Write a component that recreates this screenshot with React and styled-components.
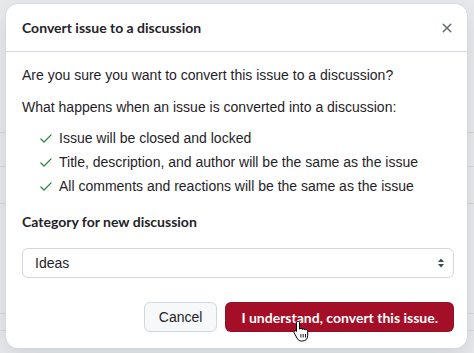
import React from 'react'
import styled, { createGlobalStyle } from 'styled-components'

const colors = {
    text: '#1f2328',
    muted: '#656d76',
    border: '#d0d7de',
    green: '#1a7f37',
    danger: '#a40e26',
    backdrop: '#e9eaec'
}

const GlobalStyle = createGlobalStyle`
    body {
        margin: 0;
        background: ${colors.backdrop};
        font-family: 'Liberation Sans', Arial, sans-serif;
        color: ${colors.text};
    }
`

const Page = styled.div`
    height: 353px;
    overflow: hidden;
    position: relative;
    width: 474px;
`

const Underlay = styled.div`
    display: flex;
    flex-direction: column;
    padding-top: 96px;
`

const UnderRow = styled.div`
    border-bottom: 1px solid #d4d7db;
    height: ${props => props.h}px;
`

const Dialog = styled.div`
    background: #ffffff;
    border-radius: 12px;
    box-shadow: 0 0 0 1px rgba(208, 215, 222, 0.6), 0 8px 24px rgba(140, 149, 159, 0.3);
    display: flex;
    flex-direction: column;
    height: 344px;
    left: 6px;
    position: absolute;
    top: 4px;
    width: 461px;
`

const Header = styled.div`
    align-items: center;
    border-bottom: 1px solid ${colors.border};
    display: flex;
    height: 47px;
    justify-content: space-between;
    padding: 0 8px 0 16px;
`

const Title = styled.h1`
    font-family: Lato, 'Liberation Sans', sans-serif;
    font-size: 14px;
    font-weight: 700;
    margin: 0;
`

const CloseButton = styled.button`
    align-items: center;
    background: transparent;
    border: none;
    color: ${colors.muted};
    display: flex;
    height: 24px;
    justify-content: center;
    padding: 0;
    width: 24px;
`

const Body = styled.div`
    display: flex;
    flex-direction: column;
    font-size: 14px;
    line-height: 20px;
    padding: 13px 13px 16px 16px;
`

const Paragraph = styled.p`
    margin: 0 0 ${props => props.gap}px;
`

const CheckList = styled.ul`
    list-style: none;
    margin: 0 0 14px;
    padding: 0 0 0 16px;
`

const CheckItem = styled.li`
    align-items: center;
    display: flex;
    gap: 5px;
    line-height: 24px;
`

const Label = styled.div`
    font-family: Lato, 'Liberation Sans', sans-serif;
    font-weight: 700;
    margin-bottom: 16px;
`

const Select = styled.div`
    align-items: center;
    border: 1px solid ${colors.border};
    border-radius: 6px;
    box-sizing: border-box;
    display: flex;
    height: 30px;
    justify-content: space-between;
    padding: 0 7px 0 12px;
`

const Actions = styled.div`
    display: flex;
    gap: 8px;
    justify-content: flex-end;
    margin-top: 24px;
    position: relative;
`

const Button = styled.button`
    background: ${props => (props.danger ? colors.danger : '#f6f8fa')};
    border: 1px solid ${props => (props.danger ? 'rgba(31, 35, 40, 0.15)' : colors.border)};
    border-radius: 6px;
    color: ${props => (props.danger ? '#ffffff' : colors.text)};
    font-family: ${props => (props.danger ? "Lato, 'Liberation Sans', sans-serif" : 'inherit')};
    font-size: 14px;
    font-weight: ${props => (props.danger ? 700 : 500)};
    height: 30px;
    padding: 0 ${props => (props.danger ? 15 : 14)}px;
`

const Cursor = styled.svg`
    left: 271px;
    position: absolute;
    top: 18px;
`

const Check = () => (
    <svg width="16" height="16" viewBox="0 0 16 16" fill={colors.green}>
        <path d="M13.5 4.5a.6.6 0 0 1 0 .85l-7.1 7.1a.6.6 0 0 1-.85 0L2.5 9.4a.6.6 0 0 1 .85-.85L6 11.2l6.65-6.7a.6.6 0 0 1 .85 0Z" />
    </svg>
)

const items = [
    'Issue will be closed and locked',
    'Title, description, and author will be the same as the issue',
    'All comments and reactions will be the same as the issue'
]

const App = () => (
    <Page>
        <GlobalStyle />
        <Underlay>
            {[36, 33, 36, 109, 16].map((h, i) => (
                <UnderRow key={i} h={h} />
            ))}
        </Underlay>
        <Dialog>
            <Header>
                <Title>Convert issue to a discussion</Title>
                <CloseButton>
                    <svg width="16" height="16" viewBox="0 0 16 16" fill="currentColor">
                        <path d="M3.72 3.72a.75.75 0 0 1 1.06 0L8 6.94l3.22-3.22a.75.75 0 1 1 1.06 1.06L9.06 8l3.22 3.22a.75.75 0 1 1-1.06 1.06L8 9.06l-3.22 3.22a.75.75 0 0 1-1.06-1.06L6.94 8 3.72 4.78a.75.75 0 0 1 0-1.06Z" />
                    </svg>
                </CloseButton>
            </Header>
            <Body>
                <Paragraph gap={12}>Are you sure you want to convert this issue to a discussion?</Paragraph>
                <Paragraph gap={9}>What happens when an issue is converted into a discussion:</Paragraph>
                <CheckList>
                    {items.map(item => (
                        <CheckItem key={item}>
                            <Check />
                            {item}
                        </CheckItem>
                    ))}
                </CheckList>
                <Label>Category for new discussion</Label>
                <Select>
                    Ideas
                    <svg width="10" height="12" viewBox="0 0 10 12" fill="#424a53">
                        <path d="M5 1.5 8 5H2Z M5 10.5 2 7h6Z" />
                    </svg>
                </Select>
                <Actions>
                    <Button>Cancel</Button>
                    <Button danger>I understand, convert this issue.</Button>
                    <Cursor width="17" height="22" viewBox="0 0 17 22">
                        <path
                            d="M5 1.5c.9 0 1.5.6 1.5 1.5v6.2c.3-.5.8-.8 1.4-.8.8 0 1.3.5 1.4 1.1.3-.4.8-.6 1.3-.6.8 0 1.3.5 1.4 1.2.3-.3.7-.5 1.2-.5.9 0 1.5.7 1.5 1.6v4.6c0 2.9-2.1 5.2-5 5.2H8.4c-1.6 0-3-.8-3.9-2.1L1.2 13c-.5-.7-.3-1.6.4-2 .6-.3 1.3-.2 1.8.3l.1.1V3c0-.9.6-1.5 1.5-1.5Z"
                            fill="#ffffff"
                            stroke="#000000"
                            strokeWidth="1"
                        />
                        <path d="M7.9 14v3.5M10.2 14v3.5M12.5 14v3.5" stroke="#000000" strokeWidth="0.9" />
                    </Cursor>
                </Actions>
            </Body>
        </Dialog>
    </Page>
)

export default App
